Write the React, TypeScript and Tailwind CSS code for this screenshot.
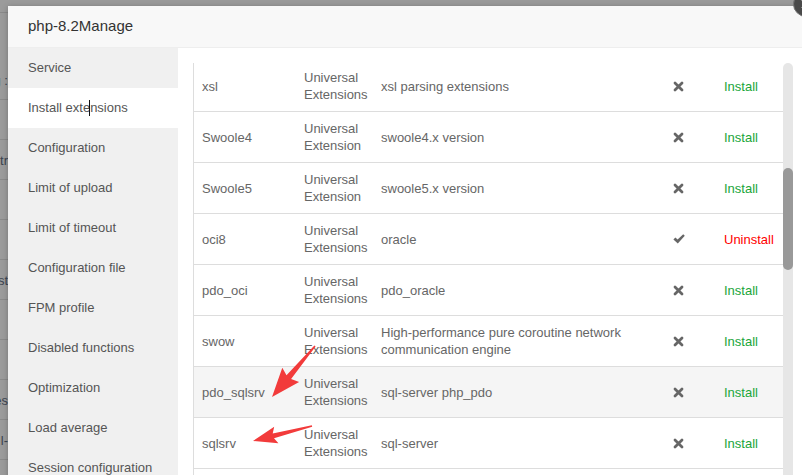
import React from "react";

type Row = {
  name: string;
  type: string;
  desc: string;
  installed: boolean;
  hover?: boolean;
};

const rows: Row[] = [
  { name: "xsl", type: "Universal Extensions", desc: "xsl parsing extensions", installed: false },
  { name: "Swoole4", type: "Universal Extension", desc: "swoole4.x version", installed: false },
  { name: "Swoole5", type: "Universal Extension", desc: "swoole5.x version", installed: false },
  { name: "oci8", type: "Universal Extensions", desc: "oracle", installed: true },
  { name: "pdo_oci", type: "Universal Extensions", desc: "pdo_oracle", installed: false },
  {
    name: "swow",
    type: "Universal Extensions",
    desc: "High-performance pure coroutine network communication engine",
    installed: false,
  },
  { name: "pdo_sqlsrv", type: "Universal Extensions", desc: "sql-server php_pdo", installed: false, hover: true },
  { name: "sqlsrv", type: "Universal Extensions", desc: "sql-server", installed: false },
  { name: "xdebug", type: "Universal Extensions", desc: "xdebug debugging extensions", installed: false },
];

const menu = [
  "Service",
  "Install extensions",
  "Configuration",
  "Limit of upload",
  "Limit of timeout",
  "Configuration file",
  "FPM profile",
  "Disabled functions",
  "Optimization",
  "Load average",
  "Session configuration",
  "Log",
];

const bgRows = [
  { h: 13, t: "" },
  { h: 87, t: "g :" },
  { h: 40, t: "" },
  { h: 40, t: "tr" },
  { h: 40, t: "" },
  { h: 40, t: "" },
  { h: 40, t: "st" },
  { h: 40, t: "" },
  { h: 40, t: "" },
  { h: 40, t: "es" },
  { h: 40, t: "l-" },
  { h: 40, t: "" },
];

function XIcon() {
  return (
    <svg width="11" height="11" viewBox="0 0 11 11">
      <path d="M2 2 L9 9 M9 2 L2 9" stroke="#666" strokeWidth="2.8" strokeLinecap="round" />
    </svg>
  );
}

function CheckIcon() {
  return (
    <svg width="12" height="10" viewBox="0 0 12 10">
      <path d="M0.4 5.4 L2.4 3.4 L4.6 5.4 L10.2 0.2 L11.8 1.8 L4.8 9.6 Z" fill="#666" />
    </svg>
  );
}

function arrow(
  x1: number,
  y1: number,
  x2: number,
  y2: number,
  headLen: number,
  headW: number,
  neckW: number
) {
  const dx = x2 - x1;
  const dy = y2 - y1;
  const len = Math.sqrt(dx * dx + dy * dy);
  const ux = dx / len;
  const uy = dy / len;
  const nx = -uy;
  const ny = ux;
  const neckX = x2 - ux * headLen;
  const neckY = y2 - uy * headLen;
  const barbX = x2 - ux * (headLen + 3);
  const barbY = y2 - uy * (headLen + 3);
  const p = (x: number, y: number) => `${x.toFixed(1)},${y.toFixed(1)}`;
  return [
    p(x1 + nx * 0.8, y1 + ny * 0.8),
    p(neckX + nx * (neckW / 2), neckY + ny * (neckW / 2)),
    p(barbX + nx * (headW / 2), barbY + ny * (headW / 2)),
    p(x2, y2),
    p(barbX - nx * (headW / 2), barbY - ny * (headW / 2)),
    p(neckX - nx * (neckW / 2), neckY - ny * (neckW / 2)),
    p(x1 - nx * 0.8, y1 - ny * 0.8),
  ].join(" ");
}

export default function App() {
  return (
    <div
      className="relative w-[802px] h-[475px] overflow-hidden bg-[#9b9b9b]"
      style={{ fontFamily: '"Liberation Sans", Arial, sans-serif' }}
    >
      {/* page behind the dialog */}
      <div className="flex flex-col w-[60px] -ml-[52px]">
        {bgRows.map((r, i) => (
          <div
            key={i}
            className="flex items-end justify-end border-b border-[#8a8a8a] text-[13px] text-[#3c4450] leading-none pb-[12px]"
            style={{ height: r.h }}
          >
            {r.t}
          </div>
        ))}
      </div>

      {/* dialog */}
      <div className="absolute left-[8px] top-[6px] w-[804px] h-[520px] bg-white flex flex-col shadow-[0_1px_6px_rgba(0,0,0,0.25)]">
        <div className="h-[42px] shrink-0 bg-[#f8f8f8] border-b border-[#eeeeee] flex items-center pl-[20px] text-[15px] text-[#333]">
          php-8.2Manage
        </div>
        <div className="flex flex-1 min-h-0">
          <div className="w-[170px] shrink-0 bg-[#f0f0f0] flex flex-col">
            {menu.map((m, i) => (
              <div
                key={m}
                className={
                  "relative h-[40px] shrink-0 flex items-center pl-[20px] text-[13px] text-[#555] " +
                  (i === 1 ? "bg-white" : "")
                }
              >
                {m}
                {i === 1 && (
                  <span className="absolute left-[81px] top-[12px] h-[16px] w-px bg-[#111]" />
                )}
              </div>
            ))}
          </div>
          <div className="flex-1 flex pl-[15px] pt-[15px] pr-[19px]">
            <div className="flex-1 overflow-hidden border-l border-[#dddddd]">
              <div className="-mt-[2px] flex flex-col">
                {rows.map((r) => (
                  <div
                    key={r.name}
                    className={
                      "grid grid-cols-[102px_77px_292px_51px_1fr] h-[51px] border-b border-[#dddddd] items-center text-[13px] text-[#666] leading-[17px] " +
                      (r.hover ? "bg-[#f5f5f5]" : "bg-white")
                    }
                  >
                    <div className="pl-[8px]">{r.name}</div>
                    <div className="pl-[8px] pr-[4px]">{r.type}</div>
                    <div className="pl-[8px] pr-[8px]">{r.desc}</div>
                    <div className="pl-[8px] flex items-center">
                      {r.installed ? <CheckIcon /> : <XIcon />}
                    </div>
                    <div
                      className={"pl-[8px] " + (r.installed ? "text-[#ff0000]" : "text-[#20a53a]")}
                    >
                      {r.installed ? "Uninstall" : "Install"}
                    </div>
                  </div>
                ))}
              </div>
            </div>
            <div className="w-[10px] shrink-0 bg-[#e6e6e6] rounded-t-full flex flex-col pt-[105px]">
              <div className="h-[102px] w-[10px] rounded-full bg-[#999999]" />
            </div>
          </div>
        </div>
      </div>

      {/* close button */}
      <div className="absolute left-[793px] top-[-9px] w-[26px] h-[26px] rounded-full bg-[#4a4a4a] border border-[#777] flex items-center justify-center">
        <svg width="10" height="10" viewBox="0 0 10 10">
          <path d="M1 1 L9 9 M9 1 L1 9" stroke="#fff" strokeWidth="1.6" />
        </svg>
      </div>

      {/* annotation arrows */}
      <svg className="absolute left-0 top-0 pointer-events-none" width="802" height="475">
        <polygon points={arrow(315, 346, 272, 397, 26, 22, 6)} fill="#f23b3b" />
        <polygon points={arrow(312, 426, 253, 441, 21, 17, 5)} fill="#f23b3b" />
      </svg>
    </div>
  );
}
